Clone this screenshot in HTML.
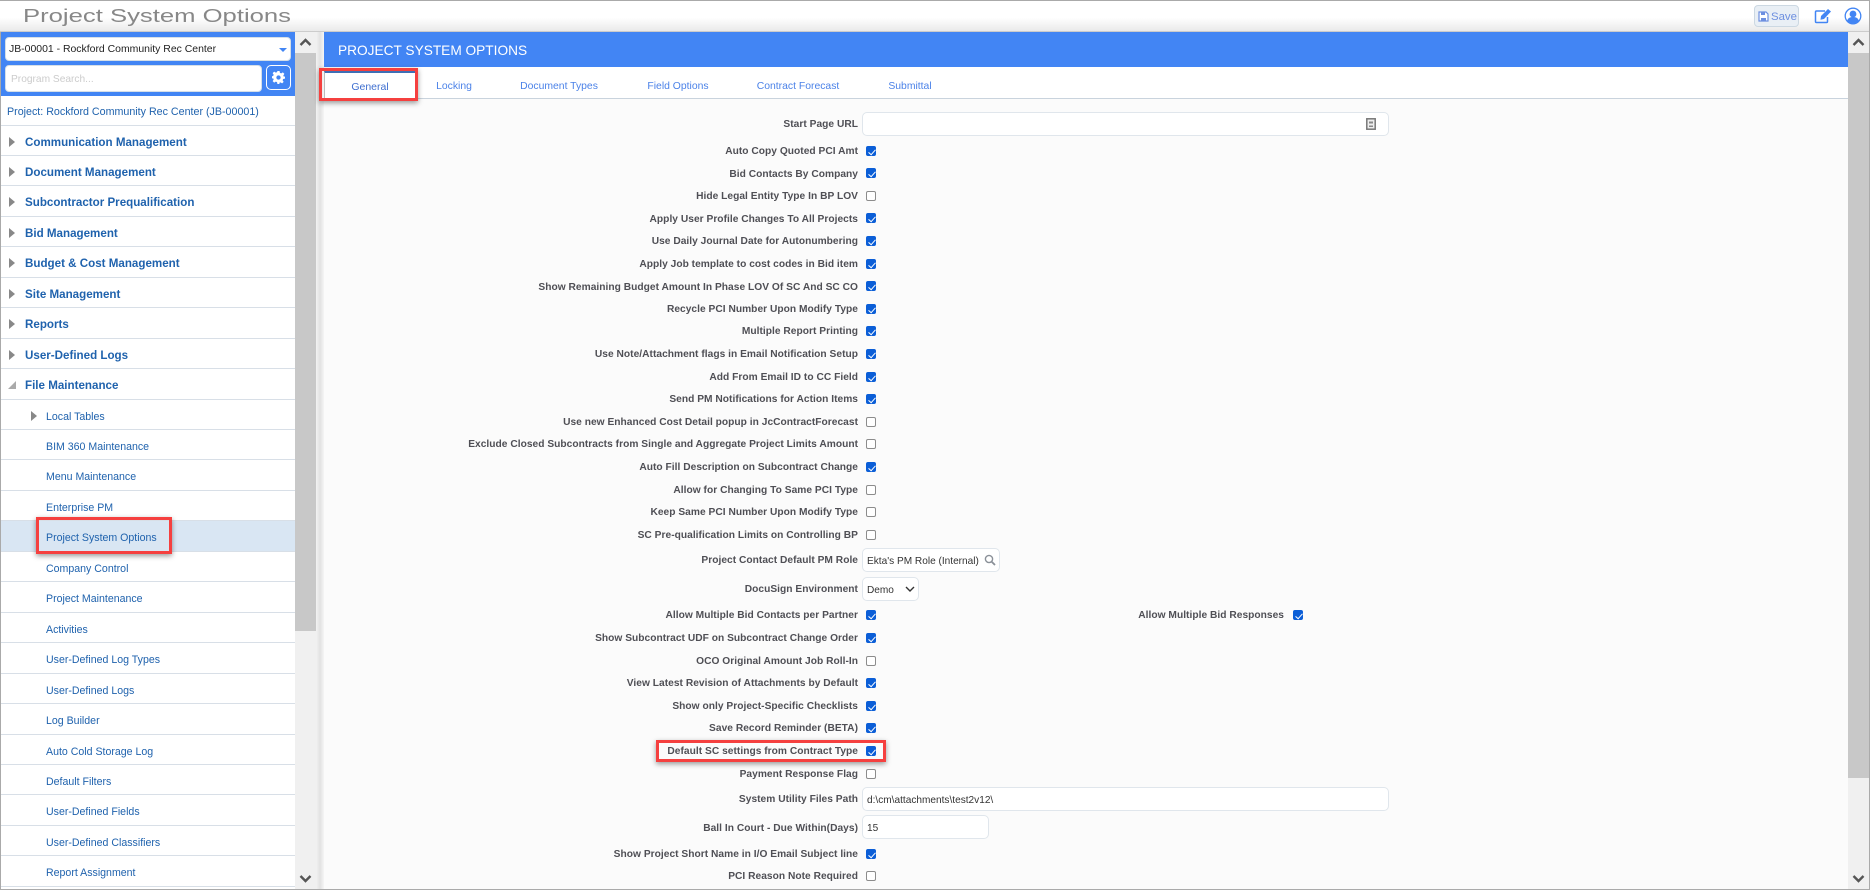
<!DOCTYPE html>
<html><head><meta charset="utf-8"><title>Project System Options</title>
<style>
*{box-sizing:border-box}
html,body{margin:0;padding:0;width:1870px;height:890px;overflow:hidden;background:#fff;font-family:"Liberation Sans",sans-serif}
.a{position:absolute}
#top{left:0;top:0;width:1870px;height:32px;background:linear-gradient(#fff 0,#fff 55%,#eaeaea 100%);border-top:1px solid #aaa;border-bottom:1px solid #ccc}
#title{left:23px;top:4px;font-size:18px;line-height:25px;color:#888;transform:scaleX(1.425);transform-origin:0 0;white-space:nowrap}
#blue{left:1px;top:32px;width:294px;height:64px;background:#4285f4}
.box{background:#fff;border:1px solid #d6dfe7;border-radius:4px}
#menu{left:1px;top:96px;width:294px}
.r{height:30.46px;border-bottom:1.5px solid #d8dfe7;color:#1f62ad;position:relative;white-space:nowrap;line-height:34px}
.p{height:29.5px;font-size:10.7px;padding-left:6px;line-height:32px}
.t{font-weight:bold;font-size:11.6px;padding-left:24px}
.s{font-size:10.6px;padding-left:45px}
.sel{background:#d9e6f3}
.tri{position:absolute;left:8px;top:11px;width:0;height:0;border-left:6px solid #888;border-top:5px solid transparent;border-bottom:5px solid transparent}
.l{position:absolute;right:1012px;height:16px;line-height:16px;margin-top:1px;font-size:10.2px;font-weight:bold;color:#4f4f55;white-space:nowrap;letter-spacing:.03px}
.c{position:absolute;left:866px;width:10px;height:10px;border-radius:2px;background:#fff;border:1px solid #8c8c8c}
.k{background:#0b5ed7;border-color:#0b5ed7}
.k::after{content:"";position:absolute;left:2.6px;top:.6px;width:3.2px;height:6px;border:solid #fff;border-width:0 1.4px 1.4px 0;transform:rotate(42deg)}
.i{position:absolute;left:862px;height:24px;background:#fff;border:1px solid #e0e6ec;border-radius:5px;font-size:10.1px;color:#333;line-height:25px;padding-left:4px;white-space:nowrap}
.tab{position:absolute;top:79px;height:16px;line-height:16px;font-size:10.4px;color:#4b82e8;transform:translateX(-50%);white-space:nowrap}
.red{position:absolute;border:3px solid #f5403f;box-shadow:0 2px 5px rgba(0,0,0,.4)}
</style></head><body>
<div class="a" id="top"></div>
<div class="a" id="title">Project System Options</div>

<div class="a" style="left:1754px;top:5px;width:45px;height:22px;background:#e9eff5;border:1px solid #ccd8e2;border-radius:4px"></div>
<svg class="a" style="left:1758px;top:11px" width="11" height="11" viewBox="0 0 11 11"><path d="M1 1h7l2 2v7H1z" fill="#fff" stroke="#6d8fe0" stroke-width="1.2"/><path d="M3 1h4v3H3zM3 7h5v3H3z" fill="#6d8fe0"/></svg>
<div class="a" style="left:1771px;top:9px;font-size:11.4px;line-height:16px;color:#6d8fe0">Save</div>
<svg class="a" style="left:1814px;top:8px" width="18" height="16" viewBox="0 0 18 16"><path d="M11 3H2.500a1 1 0 0 0-1 1v9.500a1 1 0 0 0 1 1h10a1 1 0 0 0 1-1V9" fill="none" stroke="#4285f4" stroke-width="1.5"/><path d="M7 8l7-7 3 2.500-7 7.500-3.500.8z" fill="#4285f4"/></svg>
<svg class="a" style="left:1844px;top:7px" width="18" height="18" viewBox="0 0 18 18"><circle cx="9" cy="9" r="7.800" fill="#fff" stroke="#4285f4" stroke-width="1.300"/><circle cx="9" cy="7" r="3.400" fill="#4285f4"/><path d="M3 14c1-3.500 3.500-4 6-4s5 .5 6 4c-3 3.200-9 3.200-12 0z" fill="#4285f4"/></svg>

<div class="a" style="left:0;top:32px;width:1px;height:858px;background:#aaa"></div>
<div class="a" id="blue"></div>
<div class="a box" style="left:5px;top:37px;width:286px;height:24px;font-size:10.45px;line-height:24px;color:#222;padding-left:3px;white-space:nowrap">JB-00001 - Rockford Community Rec Center</div>
<div class="a" style="left:279px;top:48px;border-top:4px solid #4285f4;border-left:4px solid transparent;border-right:4px solid transparent"></div>
<div class="a box" style="left:5px;top:65px;width:257px;height:27px;font-size:10.2px;line-height:27px;color:#ccc;padding-left:5px">Program Search...</div>
<div class="a" style="left:266px;top:65px;width:25px;height:25px;background:#4285f4;border:1px solid #fff;border-radius:5px"></div>
<svg class="a" style="left:272px;top:71px" width="13" height="13" viewBox="0 0 24 24"><path fill="#fff" fill-rule="evenodd" d="M10 0h4l.7 3.400 2.300 1 3-1.900 2.800 2.800-1.900 3 1 2.300L24 10v4l-3.400.7-1 2.300 1.900 3-2.800 2.800-3-1.900-2.300 1L14 24h-4l-.7-3.400-2.300-1-3 1.900-2.800-2.800 1.900-3-1-2.300L-1 14v-4l3.100-.7 1-2.300-1.900-3 2.800-2.800 3 1.900 2.300-1zM12 8a4 4 0 1 0 0 8 4 4 0 0 0 0-8z"/></svg>

<div class="a" id="menu">
<div class="r p">Project: Rockford Community Rec Center (JB-00001)</div>
<div class="r t"><i class="tri"></i>Communication Management</div>
<div class="r t"><i class="tri"></i>Document Management</div>
<div class="r t"><i class="tri"></i>Subcontractor Prequalification</div>
<div class="r t"><i class="tri"></i>Bid Management</div>
<div class="r t"><i class="tri"></i>Budget &amp; Cost Management</div>
<div class="r t"><i class="tri"></i>Site Management</div>
<div class="r t"><i class="tri"></i>Reports</div>
<div class="r t"><i class="tri"></i>User-Defined Logs</div>
<div class="r t"><i style="position:absolute;left:7px;top:12px;width:0;height:0;border-bottom:8px solid #aaa;border-left:8px solid transparent"></i>File Maintenance</div>
<div class="r s"><i class="tri" style="left:30px"></i>Local Tables</div>
<div class="r s">BIM 360 Maintenance</div>
<div class="r s">Menu Maintenance</div>
<div class="r s">Enterprise PM</div>
<div class="r s sel">Project System Options</div>
<div class="r s">Company Control</div>
<div class="r s">Project Maintenance</div>
<div class="r s">Activities</div>
<div class="r s">User-Defined Log Types</div>
<div class="r s">User-Defined Logs</div>
<div class="r s">Log Builder</div>
<div class="r s">Auto Cold Storage Log</div>
<div class="r s">Default Filters</div>
<div class="r s">User-Defined Fields</div>
<div class="r s">User-Defined Classifiers</div>
<div class="r s">Report Assignment</div>
</div>

<!-- sidebar scrollbar -->
<div class="a" style="left:295px;top:32px;width:21px;height:858px;background:#f0f0f0"></div>
<div class="a" style="left:295px;top:53px;width:21px;height:578px;background:#c8c8c8"></div>
<svg class="a" style="left:299px;top:37px" width="13" height="10" viewBox="0 0 13 10"><path d="M1.500 8L6.500 3l5 5" fill="none" stroke="#555" stroke-width="2.400"/></svg>
<svg class="a" style="left:299px;top:874px" width="13" height="10" viewBox="0 0 13 10"><path d="M1.500 2l5 5 5-5" fill="none" stroke="#555" stroke-width="2.400"/></svg>
<div class="a" style="left:316px;top:32px;width:8px;height:858px;background:linear-gradient(90deg,#f2f2f2,#e2e2e2 50%,#f5f5f5)"></div>

<!-- main -->
<div class="a" style="left:324px;top:67px;width:1524px;height:823px;background:#fbfbfb"></div>
<div class="a" style="left:324px;top:67px;width:1524px;height:32px;background:#fff;border-bottom:1px solid #c9d3dd"></div>
<div class="a" style="left:324px;top:32px;width:1524px;height:35px;background:#4285f4"></div>
<div class="a" style="left:338px;top:42px;font-size:13.7px;line-height:18px;color:#fff;white-space:nowrap">PROJECT SYSTEM OPTIONS</div>

<div class="a" style="left:324px;top:71px;width:92px;height:28px;background:#fff;border-top:2px solid #3f6fb5;border-left:1px solid #bbb;border-right:1px solid #bbb"></div>
<div class="tab" style="left:370px;color:#3f6fd0;font-size:10.5px">General</div>
<div class="tab" style="left:454px">Locking</div>
<div class="tab" style="left:559px">Document Types</div>
<div class="tab" style="left:678px">Field Options</div>
<div class="tab" style="left:798px">Contract Forecast</div>
<div class="tab" style="left:910px">Submittal</div>

<div class="l" style="top:116px">Start Page URL</div>
<div class="i" style="top:112px;width:527px"></div>
<svg class="a" style="left:1366px;top:118px" width="10" height="12" viewBox="0 0 10 12"><rect x=".8" y=".8" width="8.400" height="10.400" fill="#eee" stroke="#777" stroke-width="1.500"/><path d="M3 3.500h4v2H3zM3 7.500h4v1.500H3z" fill="#888"/></svg>

<div class="l" style="top:143px">Auto Copy Quoted PCI Amt</div><span class="c k" style="top:146px"></span>
<div class="l" style="top:166px">Bid Contacts By Company</div><span class="c k" style="top:168px"></span>
<div class="l" style="top:188px">Hide Legal Entity Type In BP LOV</div><span class="c" style="top:191px"></span>
<div class="l" style="top:211px">Apply User Profile Changes To All Projects</div><span class="c k" style="top:213px"></span>
<div class="l" style="top:233px">Use Daily Journal Date for Autonumbering</div><span class="c k" style="top:236px"></span>
<div class="l" style="top:256px">Apply Job template to cost codes in Bid item</div><span class="c k" style="top:259px"></span>
<div class="l" style="top:279px">Show Remaining Budget Amount In Phase LOV Of SC And SC CO</div><span class="c k" style="top:281px"></span>
<div class="l" style="top:301px">Recycle PCI Number Upon Modify Type</div><span class="c k" style="top:304px"></span>
<div class="l" style="top:323px">Multiple Report Printing</div><span class="c k" style="top:326px"></span>
<div class="l" style="top:346px">Use Note/Attachment flags in Email Notification Setup</div><span class="c k" style="top:349px"></span>
<div class="l" style="top:369px">Add From Email ID to CC Field</div><span class="c k" style="top:372px"></span>
<div class="l" style="top:391px">Send PM Notifications for Action Items</div><span class="c k" style="top:394px"></span>
<div class="l" style="top:414px">Use new Enhanced Cost Detail popup in JcContractForecast</div><span class="c" style="top:417px"></span>
<div class="l" style="top:436px">Exclude Closed Subcontracts from Single and Aggregate Project Limits Amount</div><span class="c" style="top:439px"></span>
<div class="l" style="top:459px">Auto Fill Description on Subcontract Change</div><span class="c k" style="top:462px"></span>
<div class="l" style="top:482px">Allow for Changing To Same PCI Type</div><span class="c" style="top:485px"></span>
<div class="l" style="top:504px">Keep Same PCI Number Upon Modify Type</div><span class="c" style="top:507px"></span>
<div class="l" style="top:527px">SC Pre-qualification Limits on Controlling BP</div><span class="c" style="top:530px"></span>

<div class="l" style="top:552px">Project Contact Default PM Role</div>
<div class="i" style="top:548px;width:138px">Ekta's PM Role (Internal)</div>
<svg class="a" style="left:984px;top:554px" width="12" height="12" viewBox="0 0 12 12"><circle cx="5" cy="5" r="3.600" fill="none" stroke="#8a9098" stroke-width="1.400"/><path d="M7.700 7.700l3.300 3.300" stroke="#8a9098" stroke-width="1.800"/></svg>

<div class="l" style="top:581px">DocuSign Environment</div>
<div class="i" style="top:577px;width:57px">Demo</div>
<svg class="a" style="left:905px;top:586px" width="10" height="7" viewBox="0 0 10 7"><path d="M1 1l4 4 4-4" fill="none" stroke="#333" stroke-width="1.400"/></svg>

<div class="l" style="top:607px">Allow Multiple Bid Contacts per Partner</div><span class="c k" style="top:610px"></span>
<div class="l" style="top:607px;right:586px">Allow Multiple Bid Responses</div><span class="c k" style="top:610px;left:1293px"></span>
<div class="l" style="top:630px">Show Subcontract UDF on Subcontract Change Order</div><span class="c k" style="top:633px"></span>
<div class="l" style="top:653px">OCO Original Amount Job Roll-In</div><span class="c" style="top:656px"></span>
<div class="l" style="top:675px">View Latest Revision of Attachments by Default</div><span class="c k" style="top:678px"></span>
<div class="l" style="top:698px">Show only Project-Specific Checklists</div><span class="c k" style="top:701px"></span>
<div class="l" style="top:720px">Save Record Reminder (BETA)</div><span class="c k" style="top:723px"></span>
<div class="l" style="top:743px">Default SC settings from Contract Type</div><span class="c k" style="top:746px"></span>
<div class="l" style="top:766px">Payment Response Flag</div><span class="c" style="top:769px"></span>

<div class="l" style="top:791px">System Utility Files Path</div>
<div class="i" style="top:787px;width:527px">d:\cm\attachments\test2v12\</div>
<div class="l" style="top:820px">Ball In Court - Due Within(Days)</div>
<div class="i" style="top:815px;width:127px">15</div>
<div class="l" style="top:846px">Show Project Short Name in I/O Email Subject line</div><span class="c k" style="top:849px"></span>
<div class="l" style="top:868px">PCI Reason Note Required</div><span class="c" style="top:871px"></span>

<!-- right scrollbar -->
<div class="a" style="left:1848px;top:32px;width:21px;height:858px;background:#f0f0f0"></div>
<div class="a" style="left:1848px;top:53px;width:21px;height:725px;background:#c8c8c8"></div>
<svg class="a" style="left:1852px;top:37px" width="13" height="10" viewBox="0 0 13 10"><path d="M1.500 8L6.500 3l5 5" fill="none" stroke="#555" stroke-width="2.400"/></svg>
<svg class="a" style="left:1852px;top:874px" width="13" height="10" viewBox="0 0 13 10"><path d="M1.500 2l5 5 5-5" fill="none" stroke="#555" stroke-width="2.400"/></svg>

<!-- red highlights -->
<div class="red" style="left:319px;top:68px;width:99px;height:33px"></div>
<div class="red" style="left:36px;top:517px;width:136px;height:37px"></div>
<div class="red" style="left:656px;top:740px;width:230px;height:22px"></div>

<!-- frame edges -->
<div class="a" style="left:0;top:889px;width:1870px;height:1px;background:#aaa"></div>
<div class="a" style="left:1869px;top:0;width:1px;height:890px;background:#aaa"></div>
</body></html>
